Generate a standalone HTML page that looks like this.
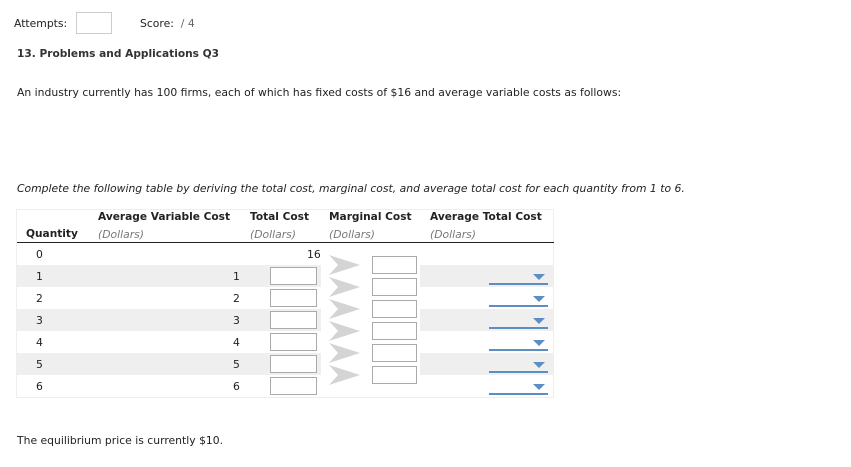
<!DOCTYPE html>
<html><head><meta charset="utf-8"><style>
body{margin:0;width:851px;height:467px;background:#fff;font-family:"DejaVu Sans","Liberation Sans",sans-serif;font-size:10.8px;color:#222;position:relative;overflow:hidden}
.a{position:absolute;white-space:nowrap;line-height:13px}
.b{font-weight:bold;font-size:10.6px}
.i{font-style:italic}
.g{color:#777;font-style:italic}
.box{position:absolute;border:1px solid #aaa;background:#fff;box-sizing:border-box}
.st{position:absolute;background:#efefef;height:22px}
.dd{position:absolute;width:59px;height:2px;background:#5b8fc4}
.tri{position:absolute;width:0;height:0;border-left:6px solid transparent;border-right:6px solid transparent;border-top:6px solid #5b8fc4}
</style></head><body>
<div class="a" style="left:14px;top:17px">Attempts:</div>
<div class="box" style="left:76px;top:12px;width:36px;height:22px;border-color:#ccc"></div>
<div class="a" style="left:140px;top:17px">Score: <span style="color:#666">&nbsp;/ 4</span></div>
<div class="a b" style="left:17px;top:48px;color:#333">13. Problems and Applications Q3</div>
<div class="a" style="left:17px;top:86px">An industry currently has 100 firms, each of which has fixed costs of $16 and average variable costs as follows:</div>
<div class="a i" style="left:17px;top:182px">Complete the following table by deriving the total cost, marginal cost, and average total cost for each quantity from 1 to 6.</div>

<div style="position:absolute;left:16px;top:209px;width:538px;height:189px;border:1px solid #eee;box-sizing:border-box"></div>
<div class="a b" style="left:98px;top:211px">Average Variable Cost</div>
<div class="a b" style="left:250px;top:211px">Total Cost</div>
<div class="a b" style="left:329px;top:211px">Marginal Cost</div>
<div class="a b" style="left:430px;top:211px">Average Total Cost</div>
<div class="a b" style="left:26px;top:228px">Quantity</div>
<div class="a g" style="left:98px;top:228px">(Dollars)</div>
<div class="a g" style="left:250px;top:228px">(Dollars)</div>
<div class="a g" style="left:329px;top:228px">(Dollars)</div>
<div class="a g" style="left:430px;top:228px">(Dollars)</div>
<div style="position:absolute;left:17px;top:242px;width:537px;height:1px;background:#222"></div>

<div class="st" style="left:17px;top:265px;width:304px"></div>
<div class="st" style="left:17px;top:309px;width:304px"></div>
<div class="st" style="left:17px;top:353px;width:304px"></div>
<div class="st" style="left:420px;top:265px;width:133px"></div>
<div class="st" style="left:420px;top:309px;width:133px"></div>
<div class="st" style="left:420px;top:353px;width:133px"></div>

<div class="a" style="left:36px;top:248px">0</div>
<div class="a" style="left:307px;top:248px">16</div>

<div class="a" style="left:36px;top:270px">1</div><div class="a" style="left:233px;top:270px">1</div>
<div class="a" style="left:36px;top:292px">2</div><div class="a" style="left:233px;top:292px">2</div>
<div class="a" style="left:36px;top:314px">3</div><div class="a" style="left:233px;top:314px">3</div>
<div class="a" style="left:36px;top:336px">4</div><div class="a" style="left:233px;top:336px">4</div>
<div class="a" style="left:36px;top:358px">5</div><div class="a" style="left:233px;top:358px">5</div>
<div class="a" style="left:36px;top:380px">6</div><div class="a" style="left:233px;top:380px">6</div>

<div class="box" style="left:270px;top:267px;width:47px;height:18px"></div>
<div class="box" style="left:270px;top:289px;width:47px;height:18px"></div>
<div class="box" style="left:270px;top:311px;width:47px;height:18px"></div>
<div class="box" style="left:270px;top:333px;width:47px;height:18px"></div>
<div class="box" style="left:270px;top:355px;width:47px;height:18px"></div>
<div class="box" style="left:270px;top:377px;width:47px;height:18px"></div>

<svg style="position:absolute;left:328px;top:255px" width="34" height="140">
<g fill="#d4d4d4">
<path d="M1 0 L32 10 L1 20 L10 10 Z"/>
<path d="M1 22 L32 32 L1 42 L10 32 Z"/>
<path d="M1 44 L32 54 L1 64 L10 54 Z"/>
<path d="M1 66 L32 76 L1 86 L10 76 Z"/>
<path d="M1 88 L32 98 L1 108 L10 98 Z"/>
<path d="M1 110 L32 120 L1 130 L10 120 Z"/>
</g></svg>

<div class="box" style="left:372px;top:256px;width:45px;height:18px"></div>
<div class="box" style="left:372px;top:278px;width:45px;height:18px"></div>
<div class="box" style="left:372px;top:300px;width:45px;height:18px"></div>
<div class="box" style="left:372px;top:322px;width:45px;height:18px"></div>
<div class="box" style="left:372px;top:344px;width:45px;height:18px"></div>
<div class="box" style="left:372px;top:366px;width:45px;height:18px"></div>

<div class="dd" style="left:489px;top:283px"></div><div class="tri" style="left:533px;top:274px"></div>
<div class="dd" style="left:489px;top:305px"></div><div class="tri" style="left:533px;top:296px"></div>
<div class="dd" style="left:489px;top:327px"></div><div class="tri" style="left:533px;top:318px"></div>
<div class="dd" style="left:489px;top:349px"></div><div class="tri" style="left:533px;top:340px"></div>
<div class="dd" style="left:489px;top:371px"></div><div class="tri" style="left:533px;top:362px"></div>
<div class="dd" style="left:489px;top:393px"></div><div class="tri" style="left:533px;top:384px"></div>

<div class="a" style="left:17px;top:434px">The equilibrium price is currently $10.</div>
</body></html>
